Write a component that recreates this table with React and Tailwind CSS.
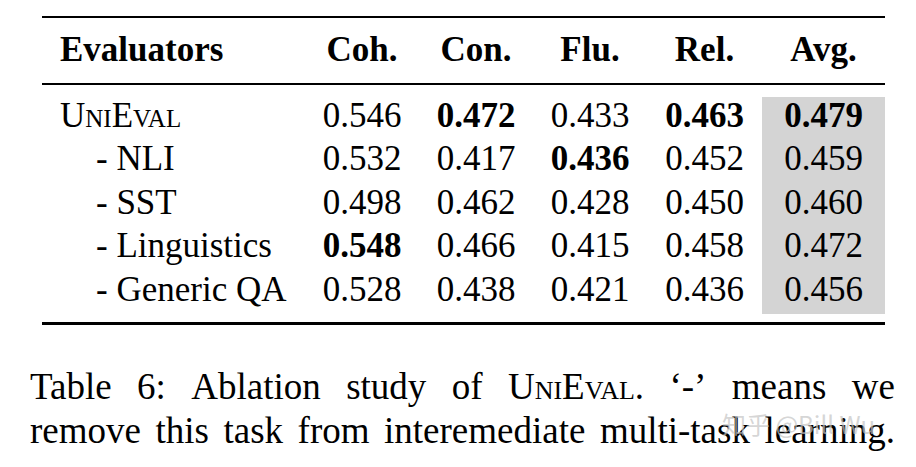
function Row({ name, sub, smallcaps, vals, bold }) {
  return (
    <div className="grid grid-cols-[263px_114px_114px_114px_115px_123px] font-['Liberation_Serif'] text-[35px] leading-[38.4px]">
      <div className={sub ? "pb-[5px] pl-[54px]" : "pb-[5px] pl-[18px]"}>
        {smallcaps ? <span className="[font-variant:small-caps]">{name}</span> : name}
      </div>
      {vals.map((v, i) => (
        <div
          key={i}
          className={
            (bold.includes(i) ? 'font-bold' : 'font-normal') +
            (i === 4 ? ' pb-[5px] text-center bg-[#d4d4d4]' : ' pb-[5px] text-center')
          }
        >
          {v}
        </div>
      ))}
    </div>
  )
}

export default function App() {
  return (
    <div className="relative w-[916px] bg-white pb-[24px]">
      <div className="ml-[42px] w-[843px] pt-[16px]">
        <div className="h-[2px] bg-black" />

        <div className="mt-[13px] grid grid-cols-[263px_114px_114px_114px_115px_123px] font-['Liberation_Serif'] font-bold text-[35px] leading-[38.4px]">
          <div className="pl-[18px]">Evaluators</div>
          <div className="text-center">Coh.</div>
          <div className="text-center">Con.</div>
          <div className="text-center">Flu.</div>
          <div className="text-center">Rel.</div>
          <div className="text-center">Avg.</div>
        </div>

        <div className="mt-[13.6px] h-[1.5px] bg-black" />

        <div className="mt-[12.5px]">
          <Row name="UniEval" smallcaps vals={['0.546', '0.472', '0.433', '0.463', '0.479']} bold={[1, 3, 4]} />
          <Row name="- NLI" sub vals={['0.532', '0.417', '0.436', '0.452', '0.459']} bold={[2]} />
          <Row name="- SST" sub vals={['0.498', '0.462', '0.428', '0.450', '0.460']} bold={[]} />
          <Row name="- Linguistics" sub vals={['0.548', '0.466', '0.415', '0.458', '0.472']} bold={[0]} />
          <Row name="- Generic QA" sub vals={['0.528', '0.438', '0.421', '0.436', '0.456']} bold={[]} />
        </div>

        <div className="mt-[8px] h-[2.5px] bg-black" />
      </div>

      <div className="mt-[40px] ml-[30px] w-[865px] font-['Liberation_Serif'] text-[37px] leading-[44px]">
        <div className="flex justify-between">
          <span>Table</span>
          <span>6:</span>
          <span>Ablation</span>
          <span>study</span>
          <span>of</span>
          <span><span className="[font-variant:small-caps]">UniEval</span>.</span>
          <span>{'\u2018-\u2019'}</span>
          <span>means</span>
          <span>we</span>
        </div>
        <div className="flex justify-between">
          <span>remove</span>
          <span>this</span>
          <span>task</span>
          <span>from</span>
          <span>interemediate</span>
          <span>multi-task</span>
          <span>learning.</span>
        </div>
      </div>

      <div className="absolute left-[722px] top-[410px] text-[24px] leading-[28px] text-[#c4c4c4]/70 whitespace-nowrap font-['Noto_Sans_CJK_SC']">
        {'\u77e5\u4e4e @Bill Wu'}
      </div>
    </div>
  )
}
